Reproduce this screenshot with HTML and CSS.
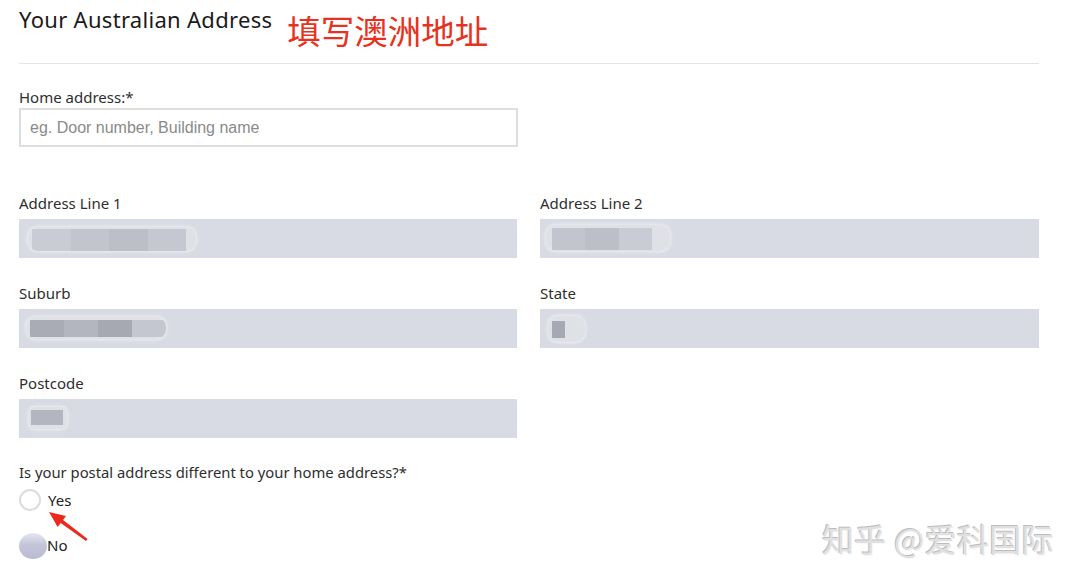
FILE: index.html
```html
<!DOCTYPE html>
<html lang="en">
<head>
<meta charset="utf-8">
<link rel="stylesheet" href="styles.css">
</head>
<body>
<div class="page">
  <div class="header">
    <h1 class="title">Your Australian Address</h1>
    <span class="note">填写澳洲地址</span>
  </div>

  <div class="home">
    <label class="label">Home address:*</label>
    <div class="input">eg. Door number, Building name</div>
  </div>

  <div class="grid">
    <div class="field">
      <label class="label">Address Line 1</label>
      <div class="box">
        <div class="blob b-a1"><i class="p1"></i><i class="p2"></i><i class="p3"></i><i class="p4"></i></div>
      </div>
    </div>
    <div class="field">
      <label class="label">Address Line 2</label>
      <div class="box">
        <div class="blob b-a2"><i class="p2"></i><i class="p3"></i><i class="p1"></i></div>
      </div>
    </div>
    <div class="field">
      <label class="label">Suburb</label>
      <div class="box">
        <div class="blob b-sub"><i class="d1"></i><i class="d2"></i><i class="d3"></i><i class="d4"></i></div>
      </div>
    </div>
    <div class="field">
      <label class="label">State</label>
      <div class="box">
        <div class="blob b-state"><i class="d3"></i></div>
      </div>
    </div>
    <div class="field">
      <label class="label">Postcode</label>
      <div class="box">
        <div class="blob b-post"><i class="d2"></i></div>
      </div>
    </div>
  </div>

  <div class="question">
    <div class="label q">Is your postal address different to your home address?*</div>
    <div class="radio"><span class="circle"></span><span>Yes</span></div>
    <div class="radio no"><span class="circle filled"></span><span>No</span></div>
    <svg class="arrow" width="44" height="34" viewBox="0 0 44 34">
      <path d="M2 2 L19 5.9 L16.1 9.9 L40.6 29 L39 31 L13.7 13.1 L10.7 17.1 Z" fill="#ea2a1c"/>
    </svg>
  </div>

  <div class="watermark">知乎 @爱科国际</div>
</div>
</body>
</html>
```

FILE: styles.css
```css
* { box-sizing: border-box; }
html, body { margin: 0; padding: 0; background: #fff; }
body {
  width: 1080px;
  height: 585px;
  overflow: hidden;
  font-family: "Noto Sans", "Open Sans", sans-serif;
  color: #222;
}
.page {
  position: relative;
  width: 1080px;
  height: 585px;
  padding-left: 19px;
}
.header {
  width: 1020px;
  height: 64px;
  display: flex;
  align-items: flex-start;
  gap: 15px;
  border-bottom: 1px solid #e4e4e4;
}
.title {
  margin: 4px 0 0 0;
  font-size: 22px;
  font-weight: 400;
  color: #1a1a1a;
  line-height: 30px;
  letter-spacing: 0.3px;
}
.note {
  margin-top: 13px;
  font-family: "Noto Sans CJK SC", sans-serif;
  font-size: 33.5px;
  color: #e8311f;
  line-height: 33px;
}
.label {
  display: block;
  font-size: 15px;
  line-height: 20px;
  color: #2e2e2e;
}
.label.q { font-size: 14.8px; }
.home {
  margin-top: 23px;
  width: 499px;
}
.home .label { margin-bottom: 1px; }
.input {
  height: 39px;
  border: 2px solid #dedede;
  padding-left: 9px;
  font-family: "Liberation Sans", Arial, sans-serif;
  font-size: 16px;
  line-height: 35px;
  color: #8a8a8a;
}
.grid {
  margin-top: 46px;
  width: 1020px;
  display: grid;
  grid-template-columns: 498px 499px;
  column-gap: 23px;
  row-gap: 25px;
}
.field .label { margin-bottom: 6px; }
.box {
  position: relative;
  height: 39px;
  background: #d8dbe3;
}
.blob {
  position: absolute;
  display: flex;
  align-items: stretch;
  border-radius: 10px;
  background: #dfe1e7;
  box-shadow: 0 0 3px 1px #eceef2;
  overflow: hidden;
}
.blob i { display: block; flex: 1; }
.p1 { background: #c9ccd4; }
.p2 { background: #c2c5cd; }
.p3 { background: #bcbfc8; }
.p4 { background: #c5c8d0; }
.d1 { background: #a9acb5; }
.d2 { background: #b3b6be; }
.d3 { background: #a6a9b2; }
.d4 { background: #c4c7cf; }
.b-a1 { left: 9px; top: 8px; width: 168px; height: 24px; padding: 2px 10px 0 4px; }
.b-a2 { left: 6px; top: 6px; width: 124px; height: 26px; padding: 3px 18px 1px 6px; }
.b-sub { left: 7px; top: 8px; width: 140px; height: 22px; padding: 3px 0 2px 4px; }
.b-state { left: 8px; top: 7px; width: 37px; height: 26px; padding: 5px 20px 4px 4px; }
.b-post { left: 10px; top: 8px; width: 38px; height: 22px; padding: 3px 4px 4px 2px; border-radius: 6px; }
.question {
  position: relative;
  margin-top: 24px;
}
.radio {
  display: flex;
  align-items: center;
  gap: 7px;
  height: 20px;
  margin-top: 8px;
  font-size: 15px;
  color: #222;
}
.radio.no { margin-top: 25px; }
.circle {
  width: 22px;
  height: 22px;
  border-radius: 50%;
  border: 2px solid #dcdcdc;
  background: #fff;
  flex: none;
}
.circle.filled {
  width: 28px;
  height: 26px;
  border: none;
  background: linear-gradient(180deg, #e6e6f0 0%, #c5c5da 45%, #babad3 100%);
  margin-right: -7px;
  margin-top: 2px;
}
.arrow {
  position: absolute;
  left: 28px;
  top: 48px;
}
.watermark {
  position: absolute;
  left: 822px;
  top: 517px;
  font-family: "Noto Sans CJK SC", sans-serif;
  font-size: 32px;
  line-height: 42px;
  color: #e0e0e0;
  text-shadow: -1px -1px 0 #bdbdbd, 1px 1px 0 #f8f8f8;
  letter-spacing: 0.3px;
}
```
